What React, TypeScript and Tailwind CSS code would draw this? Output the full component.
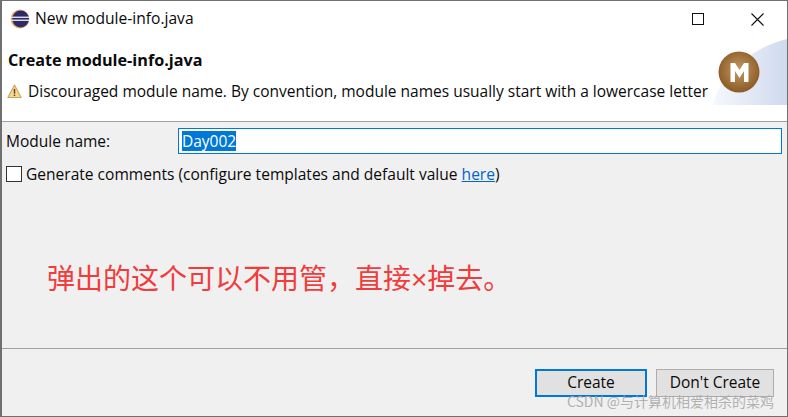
import React from "react";

const uiFont = "font-['Open_Sans','Noto_Sans',sans-serif]";

function EclipseIcon() {
  return (
    <svg width="20" height="20" viewBox="0 0 20 20" className="shrink-0">
      <circle cx="10" cy="10" r="9.4" fill="#e8b070" />
      <circle cx="10.6" cy="10" r="8.4" fill="#2f2a66" />
      <rect x="1.5" y="7.6" width="17.5" height="1.3" fill="#f0f0f8" />
      <rect x="1.5" y="10.6" width="17.5" height="1.3" fill="#f0f0f8" />
    </svg>
  );
}

function WarningIcon() {
  return (
    <svg width="15" height="15" viewBox="0 0 14 14" className="shrink-0">
      <path d="M7 1 L13.2 12.6 H0.8 Z" fill="#f7d98a" stroke="#c9a364" strokeWidth="1" strokeLinejoin="round" />
      <rect x="6.3" y="4.6" width="1.4" height="4.4" fill="#5c4a2a" />
      <rect x="6.3" y="9.8" width="1.4" height="1.4" fill="#5c4a2a" />
    </svg>
  );
}

function BannerArt() {
  return (
    <svg width="75" height="67" viewBox="0 0 75 67" className="absolute right-0 top-[1px]">
      <defs>
        <linearGradient id="wash" x1="0" y1="0" x2="1" y2="0">
          <stop offset="0" stopColor="#f6f8fd" />
          <stop offset="1" stopColor="#cfdaef" />
        </linearGradient>
        <radialGradient id="coin" cx="0.5" cy="0.45" r="0.55">
          <stop offset="0" stopColor="#c49a68" />
          <stop offset="0.75" stopColor="#9a6a34" />
          <stop offset="1" stopColor="#8a5a28" />
        </radialGradient>
      </defs>
      <path d="M1 67 C6 42 36 10 75 1 V67 Z" fill="url(#wash)" />
      <circle cx="27" cy="34" r="20.5" fill="url(#coin)" />
      <path d="M18.5 44 V25 H23 L27.5 32 L32 25 H36.5 V44 H32 V33 L27.5 40 L23 33 V44 Z" fill="#fff" />
    </svg>
  );
}

export default function App() {
  return (
    <div className={`${uiFont} relative w-[788px] h-[417px] flex flex-col overflow-hidden bg-white border border-[#707070] border-l-2 text-[15.5px] text-[#0a0a0a]`}>
      {/* Title bar */}
      <div className="flex items-center h-[36px] shrink-0 pl-[8px]">
        <EclipseIcon />
        <span className="ml-[5px] text-[15.6px] leading-none">New module-info.java</span>
        <div className="ml-auto flex items-center">
          <div className="w-[59px] h-[36px] flex items-center justify-center">
            <div className="w-[12px] h-[12px] border border-[#111]" />
          </div>
          <div className="w-[60px] h-[36px] flex items-center justify-center">
            <svg width="13" height="13" viewBox="0 0 13 13">
              <path d="M0.5 0.5 L12.5 12.5 M12.5 0.5 L0.5 12.5" stroke="#111" strokeWidth="1.1" />
            </svg>
          </div>
        </div>
      </div>

      {/* Header */}
      <div className="relative h-[85px] shrink-0 border-b border-[#a0a0a0]">
        <BannerArt />
        <div className="relative pl-[6px] pt-[13px] font-bold text-[16.2px] leading-[20px]">Create module-info.java</div>
        <div className="relative flex items-center gap-[6px] pl-[5px] mt-[11px] leading-[20px]">
          <WarningIcon />
          <span>Discouraged module name. By convention, module names usually start with a lowercase letter</span>
        </div>
      </div>

      {/* Body */}
      <div className="flex-1 flex flex-col bg-[#f0f0f0] border-b border-[#a0a0a0]">
        <div className="flex items-center mt-[6px] pl-[4px] pr-[5px]">
          <span className="w-[172px] leading-[20px]">Module name:</span>
          <div className="flex-1 h-[26px] bg-white border border-[#0078d7] flex items-center pl-[3px]">
            <span className="bg-[#0078d7] text-white leading-[20px]">Day002</span>
          </div>
        </div>
        <div className="flex items-center mt-[10px] pl-[4px]">
          <div className="w-[16px] h-[16px] bg-white border border-[#333] shrink-0" />
          <span className="ml-[4px] text-[15.56px] leading-[20px]">
            Generate comments (configure templates and default value{" "}
            <span className="text-[#0066cc] underline">here</span>)
          </span>
        </div>
        <div className="flex-1 flex items-start pl-[45px] pt-[79px]">
          <span className="font-['Liberation_Sans','Noto_Sans_CJK_SC',sans-serif] text-[28px] leading-[34px] text-[#f03c3c]">
            弹出的这个可以不用管，直接×掉去。
          </span>
        </div>
      </div>

      {/* Buttons */}
      <div className="h-[67px] shrink-0 bg-[#f0f0f0] flex justify-end items-start gap-[9px] pt-[20px] pr-[13px]">
        <button className="w-[112px] h-[28px] bg-[#e1e1e1] border-2 border-[#0078d7] leading-none">Create</button>
        <button className="w-[118px] h-[28px] bg-[#e1e1e1] border border-[#adadad] leading-none">Don't Create</button>
      </div>

      {/* Watermark */}
      <div className="absolute right-[13px] bottom-[6px] font-['Noto_Sans_CJK_SC','Noto_Sans',sans-serif] text-[14px] leading-[18px] text-[#a8a8a8]/90">
        CSDN @与计算机相爱相杀的菜鸡
      </div>
    </div>
  );
}
